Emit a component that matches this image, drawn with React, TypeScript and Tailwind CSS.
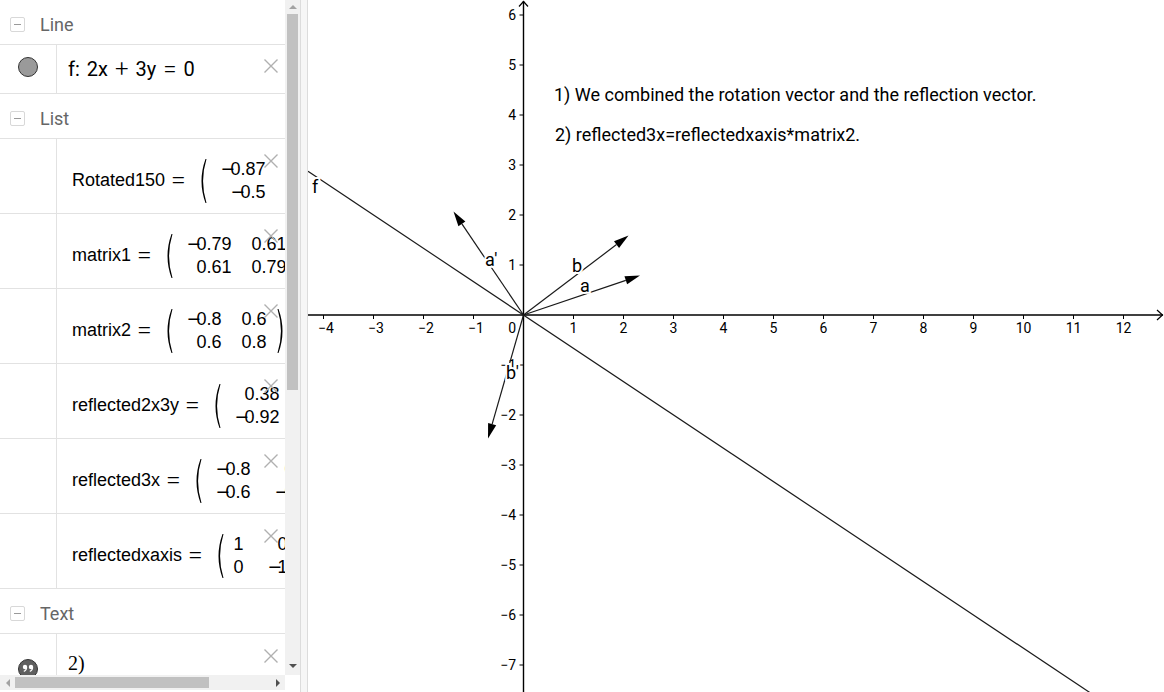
import React from 'react';

// graph coordinate helpers (page pixels)
const ox = 523.5;
const oy = 315;
const unit = 50;
const gx = (u: number) => ox + unit * u;
const gy = (v: number) => oy - unit * v;

type MatrixItem = {
  name: string;
  cells: string[][];
  closing?: boolean;
};

const matrices: MatrixItem[] = [
  { name: 'Rotated150', cells: [['−0.87', '0.5'], ['−0.5', '−0.87']] },
  { name: 'matrix1', cells: [['−0.79', '0.61'], ['0.61', '0.79']] },
  { name: 'matrix2', cells: [['−0.8', '0.6'], ['0.6', '0.8']], closing: true },
  { name: 'reflected2x3y', cells: [['0.38', '−0.92'], ['−0.92', '−0.38']] },
  { name: 'reflected3x', cells: [['−0.8', '0.6'], ['−0.6', '−0.8']] },
  { name: 'reflectedxaxis', cells: [['1', '0'], ['0', '−1']] },
];

const CloseX = ({ className }: { className: string }) => (
  <svg width="16" height="16" viewBox="0 0 16 16" className={className}>
    <path d="M1.5 1.5 L14.5 14.5 M14.5 1.5 L1.5 14.5" stroke="#b0b0b0" strokeWidth="1.4" />
  </svg>
);

const LeftParen = () => (
  <svg width="11" height="46" viewBox="0 0 11 46" className="shrink-0">
    <path d="M9.5 1 Q1.5 23 9.5 45 L10.5 45 Q3.6 23 10.5 1 Z" fill="#000" />
  </svg>
);

const RightParen = () => (
  <svg width="11" height="46" viewBox="0 0 11 46" className="ml-[10px] shrink-0">
    <path d="M1.5 1 Q9.5 23 1.5 45 L0.5 45 Q7.4 23 0.5 1 Z" fill="#000" />
  </svg>
);

// latex-ish number: wide minus sign
const Num = ({ value }: { value: string }) => {
  if (value.startsWith('−')) {
    return (
      <span className="text-right">
        <span className="inline-block w-[14px] origin-left scale-x-125">−</span>
        {value.slice(1)}
      </span>
    );
  }
  return <span className="text-right">{value}</span>;
};

const Header = ({ label }: { label: string }) => (
  <div className="flex h-[45px] items-center border-b border-[#e2e2e2] pl-[10px] pt-[5px]">
    <div className="flex h-[15px] w-[15px] items-center justify-center rounded-[2px] border border-[#d8d8d8]">
      <div className="h-px w-[7px] bg-[#9a9a9a]" />
    </div>
    <span className="ml-[15px] text-[18px] text-[#666]">{label}</span>
  </div>
);

const Matrix = ({ item }: { item: MatrixItem }) => (
  <div className="flex min-w-max shrink-0 items-center whitespace-nowrap pt-[9px] font-['Liberation_Sans',sans-serif] text-[18px] text-black">
    <span>{item.name}</span>
    <span className="ml-[8px] mr-[12px] scale-x-125">=</span>
    <LeftParen />
    <div className="ml-[10px] grid grid-cols-[auto_auto] gap-x-5 leading-[23px]">
      {item.cells.flat().map((c, i) => (
        <Num key={i} value={c} />
      ))}
    </div>
    {item.closing && <RightParen />}
  </div>
);

const Sidebar = () => (
  <div className="flex w-[300px] shrink-0 flex-col">
    <div className="flex h-[675px]">
      <div className="h-[675px] w-[285px] overflow-hidden bg-white">
        <Header label="Line" />
        <div className="flex h-[49px] border-b border-[#e2e2e2]">
          <div className="flex w-[57px] shrink-0 items-center justify-center border-r border-[#e2e2e2] pb-[4px]">
            <div className="h-[20px] w-[20px] rounded-full border border-[#333] bg-[#9a9a9a]" />
          </div>
          <div className="relative flex flex-1 items-center pl-[11px] text-[20px] text-black">
            <span>f:</span>
            <span className="ml-[7px]">2x</span>
            <span className="mx-[7px] text-[24px] font-light leading-none">+</span>
            <span>3y</span>
            <span className="mx-[7px] text-[24px] font-light leading-none">=</span>
            <span>0</span>
            <CloseX className="absolute right-[6px] top-[13px]" />
          </div>
        </div>
        <Header label="List" />
        {matrices.map((m) => (
          <div key={m.name} className="flex h-[75px] border-b border-[#e2e2e2]">
            <div className="w-[57px] shrink-0 border-r border-[#e2e2e2]" />
            <div className="relative flex flex-1 items-center overflow-hidden pl-[15px]">
              <Matrix item={m} />
              <CloseX className="absolute right-[6px] top-[14px]" />
            </div>
          </div>
        ))}
        <Header label="Text" />
        <div className="flex h-[60px]">
          <div className="flex w-[57px] shrink-0 justify-center border-r border-[#e2e2e2] pt-[25px]">
            <svg width="20" height="20" viewBox="0 0 20 20">
              <circle cx="10" cy="10" r="9.5" fill="#5f5f5f" stroke="#333" />
              <circle cx="7" cy="8" r="2.2" fill="#fff" />
              <circle cx="13" cy="8" r="2.2" fill="#fff" />
              <path d="M8.6 8.5 Q8.4 11.5 5.8 12.3 M14.6 8.5 Q14.4 11.5 11.8 12.3" stroke="#fff" strokeWidth="1.3" fill="none" />
            </svg>
          </div>
          <div className="relative flex-1 pl-[11px] pt-[17px] font-['Liberation_Serif',serif] text-[20px] leading-[24px] text-black">
            2)
            <CloseX className="absolute right-[6px] top-[14px]" />
          </div>
        </div>
      </div>
      {/* vertical scrollbar */}
      <div className="flex w-[15px] flex-col bg-[#f1f1f1]">
        <div className="flex h-[14px] items-center justify-center">
          <div className="h-0 w-0 border-x-[4px] border-b-[4px] border-x-transparent border-b-[#a3a3a3]" />
        </div>
        <div className="flex-1">
          <div className="mx-[2px] h-[376px] bg-[#c1c1c1]" />
        </div>
        <div className="flex h-[18px] items-center justify-center">
          <div className="h-0 w-0 border-x-[4px] border-t-[4px] border-x-transparent border-t-[#505050]" />
        </div>
      </div>
    </div>
    {/* horizontal scrollbar */}
    <div className="flex h-[17px]">
      <div className="flex h-[15px] w-[285px] items-center bg-[#f1f1f1]">
        <div className="flex w-[15px] justify-center">
          <div className="h-0 w-0 border-y-[4px] border-r-[4px] border-y-transparent border-r-[#a3a3a3]" />
        </div>
        <div className="h-[11px] w-[194px] bg-[#c1c1c1]" />
        <div className="flex-1" />
        <div className="flex w-[15px] justify-center">
          <div className="h-0 w-0 border-y-[4px] border-l-[4px] border-y-transparent border-l-[#505050]" />
        </div>
      </div>
    </div>
  </div>
);

type Vec = { tip: [number, number]; label: string; lx: number; ly: number };

const vectors: Vec[] = [
  { tip: [640, 275.5], label: 'a', lx: 580, ly: 292 },
  { tip: [628.5, 235.5], label: 'b', lx: 572, ly: 272 },
  { tip: [453.5, 211.5], label: "a'", lx: 485, ly: 266 },
  { tip: [488, 438.5], label: "b'", lx: 506, ly: 379 },
];

const Arrow = ({ v }: { v: Vec }) => {
  const [tx, ty] = v.tip;
  const dx = tx - ox;
  const dy = ty - oy;
  const len = Math.hypot(dx, dy);
  const ux = dx / len;
  const uy = dy / len;
  const bx = tx - ux * 15;
  const by = ty - uy * 15;
  const px = -uy * 4.2;
  const py = ux * 4.2;
  return (
    <g>
      <line x1={ox} y1={oy} x2={bx} y2={by} stroke="#1a1a1a" strokeWidth="1.2" />
      <polygon points={`${tx},${ty} ${bx + px},${by + py} ${bx - px},${by - py}`} fill="#000" />
    </g>
  );
};

const Graph = () => {
  const xs = Array.from({ length: 17 }, (_, i) => i - 4).filter((n) => n !== 0);
  const ys = Array.from({ length: 14 }, (_, i) => i - 7).filter((n) => n !== 0);
  const fx0 = 308;
  const fu0 = (fx0 - ox) / unit;
  const fx1 = gx(12.5);
  return (
    <svg width="856" height="692" viewBox="308 0 856 692" className="block font-['Roboto',sans-serif]">
      {/* axes */}
      <line x1={308} y1={oy} x2={1163} y2={oy} stroke="#000" strokeWidth="1.4" />
      <line x1={ox} y1={692} x2={ox} y2={1} stroke="#000" strokeWidth="1.4" />
      <polyline points={`1157,310 1162.5,${oy} 1157,320`} fill="none" stroke="#000" strokeWidth="1.2" />
      <polyline points={`${ox - 4.5},6.5 ${ox},1.5 ${ox + 4.5},6.5`} fill="none" stroke="#000" strokeWidth="1.2" />
      {xs.map((n) => (
        <g key={`x${n}`}>
          <line x1={gx(n)} y1={oy} x2={gx(n)} y2={oy + 4} stroke="#000" />
          <text x={gx(n) + (n < 0 ? 2.5 : 0)} y={333} textAnchor="middle" fontSize="14" fill="#000">
            {n < 0 ? `−${-n}` : n}
          </text>
        </g>
      ))}
      <text x={516} y={333} textAnchor="end" fontSize="14" fill="#000">
        0
      </text>
      {ys.map((n) => (
        <g key={`y${n}`}>
          <line x1={ox - 4} y1={gy(n)} x2={ox} y2={gy(n)} stroke="#000" />
          <text x={516} y={gy(n) + 5} textAnchor="end" fontSize="14" fill="#000">
            {n < 0 ? `−${-n}` : n}
          </text>
        </g>
      ))}
      {/* line f: 2x + 3y = 0 */}
      <line x1={fx0} y1={gy((-2 * fu0) / 3)} x2={fx1} y2={gy((-2 * 12.5) / 3)} stroke="#1a1a1a" strokeWidth="1.2" />
      {vectors.map((v) => (
        <Arrow key={v.label} v={v} />
      ))}
      {vectors.map((v) => (
        <text key={`l${v.label}`} x={v.lx} y={v.ly} fontSize="18" fill="#000" stroke="#fff" strokeWidth="4" paintOrder="stroke">
          {v.label}
        </text>
      ))}
      <text x={312} y={193} fontSize="18" fill="#000" stroke="#fff" strokeWidth="4" paintOrder="stroke">
        f
      </text>
      <text x={554} y={101} fontSize="18" fill="#000">
        1) We combined the rotation vector and the reflection vector.
      </text>
      <text x={555} y={141} fontSize="18" fill="#000">
        2) reflected3x=reflectedxaxis*matrix2.
      </text>
    </svg>
  );
}

export default function App() {
  return (
    <div className="flex h-[692px] w-[1164px] overflow-hidden bg-white font-['Roboto',sans-serif]">
      <Sidebar />
      <div className="w-[8px] shrink-0 border-x border-[#dcdcdc] bg-[#f6f6f6]" />
      <div className="flex-1 overflow-hidden">
        <Graph />
      </div>
    </div>
  );
}
